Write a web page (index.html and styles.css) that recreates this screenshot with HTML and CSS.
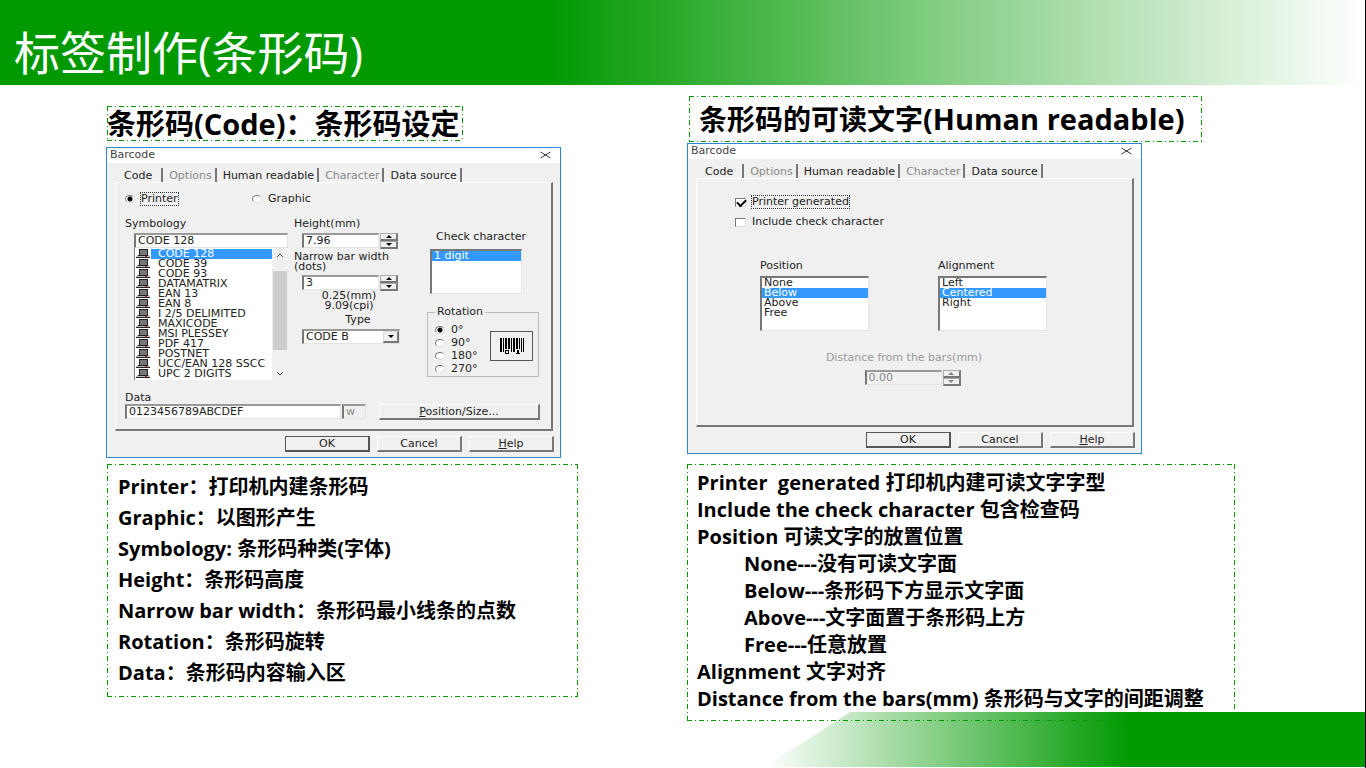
FILE: index.html
```html
<!doctype html>
<html lang="zh-CN">
<head>
<meta charset="utf-8">
<title>标签制作(条形码)</title>
<link rel="stylesheet" href="styles.css">
</head>
<body>
<svg class="defs" aria-hidden="true">
  <symbol id="printer" viewBox="0 0 14 9">
    <path d="M3 0h8v6H3z" fill="#777"/>
    <path d="M3 0h8v1H3zM3 0h1v6H3zM11 0h1v6h-1z" fill="#222"/>
    <path d="M1 6h12l1 2H0z" fill="#bbb"/>
    <path d="M0 8h14v1H0zM2 6h10v1H2z" fill="#222"/>
    <path d="M9 7h2v1H9z" fill="#a33"/>
  </symbol>
  <symbol id="close" viewBox="0 0 10 8">
    <path d="M0 1L10 7M10 1L0 7" stroke="#333" fill="none"/>
  </symbol>
  <symbol id="up" viewBox="0 0 6 3"><path d="M3 0L6 3H0z"/></symbol>
  <symbol id="down" viewBox="0 0 6 3"><path d="M0 0H6L3 3z"/></symbol>
</svg>

<header class="banner"><h1>标签制作(条形码)</h1></header>

<main class="columns">
  <section class="column column-code">
    <h2 class="frame heading">条形码(Code)：条形码设定</h2>

    <div class="dialog">
      <div class="titlebar"><span>Barcode</span><button class="close" aria-label="Close"><svg><use href="#close"/></svg></button></div>
      <div class="tabs">
        <button class="tab first active">Code</button><button class="tab" disabled>Options</button><button class="tab">Human readable</button><button class="tab" disabled>Character</button><button class="tab">Data source</button>
      </div>
      <div class="panel">
        <div class="source">
          <label><input type="radio" name="source" checked><span class="focus">Printer</span></label>
          <label><input type="radio" name="source"><span>Graphic</span></label>
        </div>
        <div class="settings">
          <div class="symbology">
            <label for="symbology">Symbology</label>
            <input type="text" id="symbology" class="field" value="CODE 128">
            <div class="listbox">
              <ul>
                <li class="selected"><svg><use href="#printer"/></svg><span>CODE 128</span></li>
                <li><svg><use href="#printer"/></svg><span>CODE 39</span></li>
                <li><svg><use href="#printer"/></svg><span>CODE 93</span></li>
                <li><svg><use href="#printer"/></svg><span>DATAMATRIX</span></li>
                <li><svg><use href="#printer"/></svg><span>EAN 13</span></li>
                <li><svg><use href="#printer"/></svg><span>EAN 8</span></li>
                <li><svg><use href="#printer"/></svg><span>I 2/5 DELIMITED</span></li>
                <li><svg><use href="#printer"/></svg><span>MAXICODE</span></li>
                <li><svg><use href="#printer"/></svg><span>MSI PLESSEY</span></li>
                <li><svg><use href="#printer"/></svg><span>PDF 417</span></li>
                <li><svg><use href="#printer"/></svg><span>POSTNET</span></li>
                <li><svg><use href="#printer"/></svg><span>UCC/EAN 128 SSCC</span></li>
                <li><svg><use href="#printer"/></svg><span>UPC 2 DIGITS</span></li>
              </ul>
              <div class="scrollbar">
                <svg viewBox="0 0 8 5"><path d="M1 4L4 1L7 4"/></svg>
                <div class="thumb"></div>
                <svg viewBox="0 0 8 5"><path d="M1 1L4 4L7 1"/></svg>
              </div>
            </div>
          </div>

          <div class="sizes">
            <label for="height">Height(mm)</label>
            <div class="spin">
              <input type="text" id="height" class="field" value="7.96">
              <span class="arrows"><button aria-label="More"><svg><use href="#up"/></svg></button><button aria-label="Less"><svg><use href="#down"/></svg></button></span>
            </div>
            <label for="narrow" class="narrow">Narrow bar width<br>(dots)</label>
            <div class="spin">
              <input type="text" id="narrow" class="field" value="3">
              <span class="arrows"><button aria-label="More"><svg><use href="#up"/></svg></button><button aria-label="Less"><svg><use href="#down"/></svg></button></span>
            </div>
            <p class="density">0.25(mm)<br>9.09(cpi)</p>
            <label for="type" class="type">Type</label>
            <div class="dropdown">
              <select id="type" class="field"><option>CODE B</option></select>
              <span class="drop"><svg><use href="#down"/></svg></span>
            </div>
          </div>

          <div class="extras">
            <label for="check">Check character</label>
            <select id="check" class="list" size="4"><option selected>1 digit</option></select>
            <fieldset>
              <legend>Rotation</legend>
              <div class="angles">
                <label><input type="radio" name="rotation" checked><span>0°</span></label>
                <label><input type="radio" name="rotation"><span>90°</span></label>
                <label><input type="radio" name="rotation"><span>180°</span></label>
                <label><input type="radio" name="rotation"><span>270°</span></label>
              </div>
              <div class="preview">
                <svg viewBox="0 0 24 17" shape-rendering="crispEdges">
                  <path d="M0 0h2v14H0zM3 0h1v14H3zM5 0h2v11H5zM8 0h2v11H8zM11 0h1v14h-1zM13 0h2v14h-2zM16 0h2v11h-2zM19 0h1v11h-1zM21 0h1v14h-1zM23 0h1v14h-1z"/>
                  <path d="M5 12h4v4H5zM17 12h2v3h-2zM16 15h4v1h-4z"/>
                  <path d="M6 13h2v2H6z" fill="#f0f0f0"/>
                </svg>
              </div>
            </fieldset>
          </div>
        </div>
        <div class="data">
          <label for="data">Data</label>
          <div class="data-row">
            <input type="text" id="data" class="field" value="0123456789ABCDEF">
            <input type="text" class="field unit" value="w" aria-label="Wizard" disabled>
            <button class="button"><u>P</u>osition/Size...</button>
          </div>
        </div>
      </div>
      <div class="actions">
        <button class="button default">OK</button>
        <button class="button">Cancel</button>
        <button class="button"><u>H</u>elp</button>
      </div>
    </div>

    <div class="frame notes">
      <p>Printer：打印机内建条形码</p>
      <p>Graphic：以图形产生</p>
      <p>Symbology: 条形码种类(字体)</p>
      <p>Height：条形码高度</p>
      <p>Narrow bar width：条形码最小线条的点数</p>
      <p>Rotation：条形码旋转</p>
      <p>Data：条形码内容输入区</p>
    </div>
  </section>

  <section class="column column-text">
    <h2 class="frame heading">条形码的可读文字<span class="latin">(Human readable)</span></h2>

    <div class="dialog">
      <div class="titlebar"><span>Barcode</span><button class="close" aria-label="Close"><svg><use href="#close"/></svg></button></div>
      <div class="tabs">
        <button class="tab first">Code</button><button class="tab" disabled>Options</button><button class="tab active">Human readable</button><button class="tab" disabled>Character</button><button class="tab">Data source</button>
      </div>
      <div class="panel">
        <div class="checks">
          <label><input type="checkbox" checked><span class="focus">Printer generated</span></label>
          <label><input type="checkbox"><span>Include check character</span></label>
        </div>
        <div class="placing">
          <div>
            <label for="position">Position</label>
            <select id="position" class="list" size="5"><option>None</option><option selected>Below</option><option>Above</option><option>Free</option></select>
          </div>
          <div>
            <label for="alignment">Alignment</label>
            <select id="alignment" class="list" size="5"><option>Left</option><option selected>Centered</option><option>Right</option></select>
          </div>
        </div>
        <div class="distance">
          <label for="distance">Distance from the bars(mm)</label>
          <div class="spin">
            <input type="text" id="distance" class="field" value="0.00" disabled>
            <span class="arrows"><button aria-label="More" disabled><svg><use href="#up"/></svg></button><button aria-label="Less" disabled><svg><use href="#down"/></svg></button></span>
          </div>
        </div>
      </div>
      <div class="actions">
        <button class="button default">OK</button>
        <button class="button">Cancel</button>
        <button class="button"><u>H</u>elp</button>
      </div>
    </div>

    <div class="frame notes">
      <p>Printer  generated 打印机内建可读文字字型</p>
      <p>Include the check character 包含检查码</p>
      <p>Position 可读文字的放置位置</p>
      <p class="sub">None---没有可读文字面</p>
      <p class="sub">Below---条形码下方显示文字面</p>
      <p class="sub">Above---文字面置于条形码上方</p>
      <p class="sub">Free---任意放置</p>
      <p>Alignment 文字对齐</p>
      <p>Distance from the bars(mm) 条形码与文字的间距调整</p>
    </div>
  </section>
</main>

<footer class="corner"></footer>
</body>
</html>
```

FILE: styles.css
```css
* {
  box-sizing: border-box;
}
body {
  position: relative;
  min-height: 100vh;
  margin: 0;
  background: white;
  border-right: 1px solid black;
  font-family: "Open Sans", "Noto Sans CJK SC", sans-serif;
}
h1, h2, p, ul, fieldset {
  margin: 0;
  padding: 0;
}
.defs {
  display: none;
}

/* slide */
.banner {
  height: 85px;
  padding: 20px 14px 0;
  background: linear-gradient(to right, #009900 40%, #80cc80 68%, white);
}
.banner h1 {
  color: white;
  font-size: 46px;
  line-height: 64px;
  font-weight: 400;
}
.columns {
  display: grid;
  grid-template-columns: 581fr 678fr;
  padding-left: 106px;
}
.column {
  display: flex;
  flex-direction: column;
  align-items: flex-start;
}
.column-code {
  padding-top: 21px;
  gap: 6px;
}
.column-text {
  padding-top: 11px;
}

/* dash-dot outline, one gradient for each side */
.frame {
  --dash-x: repeating-linear-gradient(to right, #009900 0 5px, transparent 5px 8px, #009900 8px 9px, transparent 9px 12px);
  --dash-y: repeating-linear-gradient(to bottom, #009900 0 5px, transparent 5px 8px, #009900 8px 9px, transparent 9px 12px);
  background:
    var(--dash-x) top / 100% 1px no-repeat,
    var(--dash-x) bottom / 100% 1px no-repeat,
    var(--dash-y) left / 1px 100% no-repeat,
    var(--dash-y) right / 1px 100% no-repeat;
}
.heading {
  font-size: 28px;
  font-weight: bold;
  white-space: nowrap;
}
.heading .latin {
  font-size: 29px;
}
.column-code .heading {
  width: 356px;
  margin-left: 1px;
  font-size: 29px;
  line-height: 35px;
}
.column-text .heading {
  width: 513px;
  height: 46px;
  margin: 0 0 1px 2px;
  padding-left: 10px;
  line-height: 46px;
}
.notes {
  width: 100%;
  font-size: 20px;
  font-weight: bold;
}
.notes p {
  white-space: pre;
}
.column-code .notes {
  max-width: 471px;
  margin-left: 1px;
  padding: 7px 11px 9px;
  line-height: 31px;
}
.column-text .notes {
  max-width: 548px;
  margin-top: 10px;
  padding: 5px 10px 9px;
  line-height: 27px;
}
.notes .sub {
  padding-left: 47px;
}
.corner {
  position: absolute;
  right: 0;
  bottom: 1px;
  width: 44%;
  height: 55px;
  background: linear-gradient(to right, rgba(0, 153, 0, 0), #009900 61%);
  clip-path: polygon(86px 0, 100% 0, 100% 100%, 0 100%);
}

/* dialogs */
.dialog {
  width: 100%;
  max-width: 455px;
  padding-bottom: 5px;
  background: #f0f0f0;
  border: 1px solid #2b86cf;
  color: #222;
  font: 11px/12px "DejaVu Sans", sans-serif;
}
.dialog input, .dialog select, .dialog button {
  margin: 0;
  font: inherit;
  color: inherit;
}
.dialog svg {
  display: block;
}
.titlebar {
  display: flex;
  justify-content: space-between;
  align-items: center;
  height: 15px;
  padding: 0 9px 1px 3px;
  background: white;
  color: #444;
}
.close {
  padding: 0;
  border: 0;
  background: none;
}
.close svg {
  width: 11px;
  height: 8px;
}
.tabs {
  display: flex;
  padding: 5px 8px 0;
}
.dialog .tab {
  height: 14px;
  padding: 2px 3px 0 6px;
  border: 0;
  border-right: 2px solid #777;
  background: none;
  white-space: nowrap;
}
.dialog .tab.first {
  padding: 2px 9px 0 9px;
}
.dialog .tab.active {
  padding-top: 1px;
}
.dialog .tab:disabled {
  color: #888;
}
.panel {
  height: 249px;
  margin: 0 7px 5px 8px;
  padding: 10px 10px 0 9px;
  border: 1px solid white;
  border-right: 2px solid #777;
  border-bottom: 2px solid #777;
}
.panel label {
  display: block;
}
.actions {
  display: flex;
  justify-content: flex-end;
  gap: 7px;
  padding-right: 6px;
}
.dialog .button {
  width: 85px;
  height: 16px;
  padding: 0;
  border: 1px solid white;
  border-right: 2px solid #777;
  border-bottom: 2px solid #777;
  background: #f0f0f0;
  line-height: 12px;
}
.dialog .button.default {
  border-color: #555;
}
.field {
  display: block;
  width: 100%;
  height: 15px;
  padding: 0 2px 2px;
  border: 1px solid #e3e3e3;
  border-top: 2px solid #999;
  border-left: 2px solid #777;
  border-radius: 0;
  background: white;
}
.field:disabled {
  background: #f0f0f0;
}
.dialog .field:disabled {
  color: #888;
}
.list {
  display: block;
  padding: 0;
  border: 1px solid #e3e3e3;
  border-top: 2px solid #777;
  border-left: 2px solid #777;
  border-radius: 0;
  background: white;
  overflow: hidden;
  outline: 0;
}
.list option {
  display: flex;
  align-items: center;
  height: 10px;
  min-height: 0;
  padding: 0 2px 1px;
  line-height: 10px;
}
.list option:checked {
  background: linear-gradient(#3399ff, #3399ff);
  color: white;
}
input[type=radio], input[type=checkbox] {
  appearance: none;
  width: 10px;
  height: 8px;
  background: white;
  border: 1px solid #ddd;
  border-top-color: #777;
  border-left-color: #777;
}
input[type=radio] {
  border-radius: 50%;
}
input[type=radio]:checked {
  background: radial-gradient(circle, black 2px, white 3px);
}
input[type=checkbox] {
  width: 11px;
  height: 9px;
}
input[type=checkbox]:checked::before {
  content: "";
  display: block;
  width: 7px;
  height: 4px;
  margin: 0 0 0 1px;
  border: solid black;
  border-width: 0 0 2px 2px;
  transform: rotate(-45deg);
}
.source label, .angles label, .checks label {
  display: flex;
  align-items: center;
  gap: 6px;
}
.focus {
  outline: 1px dotted #333;
}
.spin {
  display: flex;
  gap: 1px;
  width: 96px;
}
.spin .field {
  flex: 1;
  min-width: 0;
}
.arrows {
  width: 18px;
}
.arrows button {
  display: flex;
  align-items: center;
  justify-content: center;
  width: 18px;
  height: 8px;
  padding: 0;
  border: 1px solid #aaa;
  border-right: 2px solid #777;
  border-bottom: 2px solid #777;
  background: #f0f0f0;
}
.arrows svg, .drop svg {
  width: 6px;
  height: 3px;
}
.arrows button:disabled svg {
  fill: #888;
}

/* Code tab */
.source {
  display: flex;
}
.source label {
  width: 127px;
}
.settings {
  display: grid;
  grid-template-columns: 169px 133px 1fr;
  margin-top: 13px;
}
.symbology {
  padding: 0 6px 0 9px;
}
.symbology > label {
  margin: 0 0 3px -9px;
}
.listbox {
  display: flex;
  width: 154px;
  height: 132px;
  padding-top: 1px;
  border-left: 1px solid #777;
  background: white;
}
.listbox ul {
  flex: 1;
  list-style: none;
}
.listbox li {
  display: flex;
  gap: 1px;
  height: 10px;
  padding-left: 1px;
  line-height: 10px;
  white-space: nowrap;
}
.listbox li svg {
  width: 14px;
  height: 9px;
}
.listbox li span {
  flex: 1;
  padding-left: 7px;
}
.listbox .selected span {
  background: #3399ff;
  color: white;
}
.scrollbar {
  display: flex;
  flex-direction: column;
  align-items: center;
  gap: 13px;
  width: 16px;
  padding: 4px 0;
  background: #f0f0f0;
}
.scrollbar svg {
  width: 8px;
  height: 5px;
  fill: none;
  stroke: #444;
}
.thumb {
  width: 14px;
  height: 79px;
  margin-bottom: auto;
  background: #cdcdcd;
}
.sizes .spin, .sizes .dropdown {
  margin-left: 8px;
}
.sizes .spin {
  margin-top: 3px;
}
.panel .narrow {
  margin-top: 3px;
  line-height: 10px;
}
.density {
  width: 110px;
  line-height: 10px;
  text-align: center;
}
.panel .type {
  width: 128px;
  margin: 3px 0;
  text-align: center;
}
.dropdown {
  position: relative;
  width: 98px;
}
.dropdown select {
  appearance: none;
}
.drop {
  position: absolute;
  top: 2px;
  right: 1px;
  display: grid;
  place-items: center;
  width: 16px;
  height: 12px;
  border: 1px solid #ddd;
  border-right: 2px solid #777;
  border-bottom: 2px solid #777;
  background: #f0f0f0;
  pointer-events: none;
}
.extras {
  padding: 13px 0 0;
}
.extras > label {
  margin-left: 9px;
  white-space: nowrap;
}
#check {
  width: 92px;
  height: 45px;
  margin: 6px 0 12px 3px;
}
fieldset {
  display: flex;
  justify-content: space-between;
  width: 112px;
  height: 71px;
  padding: 5px 5px 0 7px;
  border: 1px solid #bbb;
}
legend {
  padding: 0 2px;
}
.angles label {
  height: 13px;
}
.preview {
  display: grid;
  place-items: center;
  width: 43px;
  height: 30px;
  margin-top: 8px;
  border: 1px solid #555;
}
.preview svg {
  width: 24px;
  height: 17px;
}
.data {
  margin-top: 12px;
}
.data-row {
  display: flex;
}
.data-row #data {
  width: 216px;
  margin-right: 1px;
}
.data-row .unit {
  width: 24px;
}
.data-row .button {
  width: 161px;
  margin-left: 13px;
}

/* Human readable tab */
.checks {
  display: grid;
  gap: 8px;
  padding: 7px 0 0 29px;
}
.placing {
  display: grid;
  grid-template-columns: 178px 1fr;
  margin: 32px 0 0 54px;
}
.placing .list {
  width: 109px;
  height: 55px;
  margin-top: 4px;
}
.distance {
  display: grid;
  justify-items: center;
  gap: 6px;
  width: 396px;
  margin-top: 21px;
  color: #999;
}
.distance .spin {
  margin-left: 17px;
}
```
